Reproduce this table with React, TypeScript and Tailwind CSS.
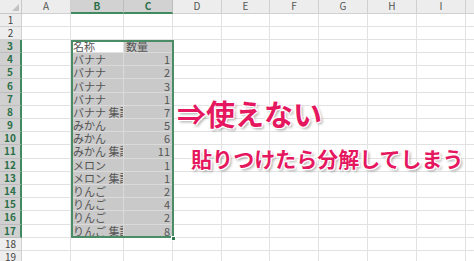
import React from "react";

const cols = ["A", "B", "C", "D", "E", "F", "G", "H", "I", "J"];
const widths = [49, 53, 49, 49, 48, 49, 49, 49, 49, 40];

const data: Record<number, [string, string]> = {
  3: ["名称", "数量"],
  4: ["バナナ", "1"],
  5: ["バナナ", "2"],
  6: ["バナナ", "3"],
  7: ["バナナ", "1"],
  8: ["バナナ 集計", "7"],
  9: ["みかん", "5"],
  10: ["みかん", "6"],
  11: ["みかん 集計", "11"],
  12: ["メロン", "1"],
  13: ["メロン 集計", "1"],
  14: ["りんご", "2"],
  15: ["りんご", "4"],
  16: ["りんご", "2"],
  17: ["りんご 集計", "8"],
};

const rows = Array.from({ length: 19 }, (_, i) => i + 1);
const font = { fontFamily: '"Noto Sans CJK JP", "Noto Sans", sans-serif' };

export default function App() {
  return (
    <div
      className="relative w-[474px] h-[261px] overflow-hidden bg-white"
      style={font}
    >
      <div
        className="grid"
        style={{
          gridTemplateColumns: `22px ${widths.map((w) => w + "px").join(" ")}`,
          gridTemplateRows: `13.5px repeat(19, 13.2px)`,
        }}
      >
        {/* corner */}
        <div className="relative bg-[#ededed] border-r border-b border-[#c9c9c9]">
          <svg className="absolute right-[2px] bottom-[2px]" width="7" height="7" viewBox="0 0 7 7">
            <polygon points="7,0 7,7 0,7" fill="#c2c2c2" />
          </svg>
        </div>
        {cols.map((c) => {
          const sel = c === "B" || c === "C";
          return (
            <div
              key={c}
              className={
                sel
                  ? "flex items-center justify-center bg-[#d2d2d2] border-r border-[#bdbdbd] border-b-2 border-b-[#3f8a5e] text-[10px] leading-none text-[#2b6e47] font-bold"
                  : "flex items-center justify-center bg-[#ededed] border-r border-b border-[#d0d0d0] text-[10px] leading-none text-[#555]"
              }
            >
              {c}
            </div>
          );
        })}
        {rows.map((r) => {
          const selRow = r >= 3 && r <= 17;
          const d = data[r];
          return (
            <React.Fragment key={r}>
              <div
                className={
                  selRow
                    ? "flex items-center justify-center bg-[#d0d0d0] border-b border-[#bdbdbd] border-r-2 border-r-[#3f8a5e] text-[10px] leading-none font-bold text-[#2b6e47]"
                    : "flex items-center justify-center bg-[#ededed] border-b border-r border-[#d0d0d0] text-[10px] leading-none text-[#444]"
                }
              >
                {r}
              </div>
              {cols.map((c) => {
                const inSel = selRow && (c === "B" || c === "C");
                const active = r === 3 && c === "B";
                let text = "";
                let right = false;
                if (d && c === "B") text = d[0];
                if (d && c === "C") {
                  text = d[1];
                  right = r !== 3;
                }
                return (
                  <div
                    key={c}
                    className={
                      (active
                        ? "bg-white border-[#e2e2e2] "
                        : inSel
                        ? "bg-[#c9c9c9] border-[#dadada] "
                        : "bg-white border-[#e2e2e2] ") +
                      "border-r border-b overflow-hidden whitespace-nowrap text-[11px] leading-[12px] text-[#555] px-[2px] flex items-center " +
                      (right ? "justify-end" : "justify-start")
                    }
                  >
                    {text}
                  </div>
                );
              })}
            </React.Fragment>
          );
        })}
      </div>

      {/* selection border */}
      <div className="absolute left-[70.5px] top-[39.5px] w-[103px] h-[198.5px] border-2 border-[#4a8c66] pointer-events-none" />
      <div className="absolute left-[171px] top-[236px] w-[5px] h-[5px] bg-[#2f7a4d] border border-white" />

      {/* annotation text */}
      <div
        className="absolute left-[177px] top-[99px] text-[29px] leading-none font-bold text-[#e5175f] whitespace-nowrap [text-shadow:1px_1px_0_#fff,-1px_-1px_0_#fff,1px_-1px_0_#fff,-1px_1px_0_#fff,0_0_3px_#fff,2px_2px_3px_rgba(0,0,0,0.4)]"
      >
        ⇒使えない
      </div>
      <div
        className="absolute left-[191px] top-[148px] text-[21px] leading-none font-bold text-[#e5175f] whitespace-nowrap [text-shadow:1px_1px_0_#fff,-1px_-1px_0_#fff,1px_-1px_0_#fff,-1px_1px_0_#fff,0_0_3px_#fff,2px_2px_3px_rgba(0,0,0,0.4)]"
      >
        貼りつけたら分解してしまう
      </div>
    </div>
  );
}
